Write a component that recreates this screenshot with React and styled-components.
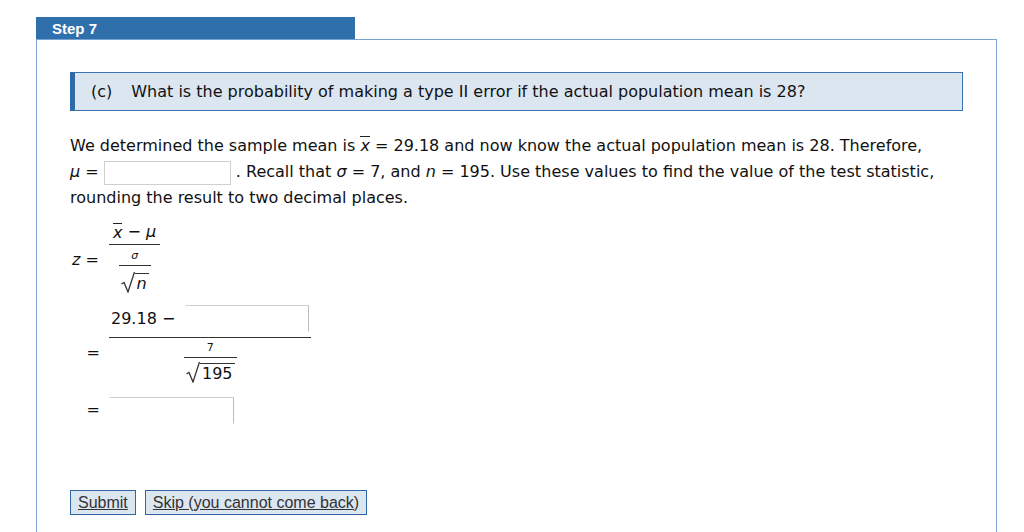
import React from 'react';
import styled, { createGlobalStyle } from 'styled-components';

const Global = createGlobalStyle`
  html, body { margin: 0; padding: 0; background: #fff; }
  body { font-family: "DejaVu Sans", Verdana, sans-serif; color: #222; }
`;

const Page = styled.div`
  padding: 17px 0 0 36px;
  width: 961px;
  height: 515px;
  overflow: hidden;
`;

const StepTab = styled.div`
  width: 303px;
  height: 23px;
  padding-left: 16px;
  background: #2f6fab;
  color: #fff;
  font-family: "Liberation Sans", Arial, sans-serif;
  font-weight: bold;
  font-size: 15px;
  line-height: 23px;
`;

const Panel = styled.div`
  border: 1px solid #7ba3d2;
  border-bottom: none;
  margin-top: -1px;
  padding: 32px 33px 0 33px;
  height: 500px;
`;

const Question = styled.div`
  height: 37px;
  background: #dce6f1;
  border: 1px solid #3a74b0;
  border-left: 5px solid #2f6ba6;
  display: flex;
  align-items: center;
  padding-left: 16px;
  font-size: 16px;
  color: #111;
`;

const Part = styled.span`
  margin-right: 19px;
`;

const Para = styled.p`
  margin: 22px 0 0 0;
  font-size: 16px;
  line-height: 26px;
  color: #111;
`;

const I = styled.i`
  font-style: italic;
`;

const Bar = styled.span`
  display: inline-block;
  border-top: 1.5px solid #222;
  line-height: 1;
  padding-top: 1px;
`;

const Field = styled.span`
  display: inline-block;
  vertical-align: middle;
  width: ${p => p.$w || 124}px;
  height: ${p => p.$h || 24}px;
  margin-top: ${p => p.$mt || 0}px;
  border: 1px solid #cfcfcf;
  ${p => p.$soft && 'border-left-color: #fff; border-bottom-color: #fff; border-right-color: #bdbdbd;'}
  background: #fff;
  box-sizing: border-box;
`;

const Formula = styled.div`
  margin-top: 11px;
  display: grid;
  grid-template-columns: 39px auto;
  justify-content: start;
  justify-items: start;
  align-items: center;
  row-gap: 12px;
  font-size: 16px;
  color: #111;
`;

const Eq = styled.div`
  justify-self: stretch;
  text-align: ${p => p.$right ? 'right' : 'left'};
  padding-left: 2px;
  padding-right: ${p => p.$right ? '9px' : '0'};
  padding-top: ${p => (p.$drop || 0) * 2}px;
`;

const Frac = styled.span`
  display: inline-flex;
  flex-direction: column;
  align-items: center;
  vertical-align: middle;
`;

const Num = styled.span`
  padding: 0 ${p => p.$pad ?? 4}px ${p => p.$bottom ?? 3}px;
  white-space: nowrap;
  display: flex;
  align-items: center;
`;

const Den = styled.span`
  border-top: 1px solid #333;
  padding: ${p => p.$top ?? 2}px ${p => p.$pad ?? 2}px 0;
  align-self: stretch;
  display: flex;
  justify-content: center;
`;

const Small = styled.span`
  font-size: 11px;
  font-style: ${p => p.$it ? 'italic' : 'normal'};
  padding: 0 0 3px;
`;

const Sqrt = styled.span`
  display: inline-flex;
  align-items: flex-end;
`;

const Radicand = styled.span`
  border-top: 1px solid #333;
  padding: 1px 2px 0 2px;
  line-height: 18px;
  margin-top: 4px;
`;

const Buttons = styled.div`
  margin-top: 66px;
  display: flex;
  gap: 9px;
`;

const Button = styled.button`
  height: 25px;
  padding: 0 7px;
  background: #dce6f1;
  border: 1px solid #2f66a3;
  border-radius: 0;
  font-family: "Liberation Sans", Arial, sans-serif;
  font-size: 16px;
  color: #333;
  text-decoration: underline;
  cursor: pointer;
`;

function RootSign() {
  return (
    <svg width="14" height="22" viewBox="0 0 14 22">
      <path d="M0.5 13 L3 11.5 L7 21 L13.5 1" fill="none" stroke="#333" strokeWidth="1.3" />
    </svg>
  );
}

export default function App() {
  return (
    <>
      <Global />
      <Page>
        <StepTab>Step 7</StepTab>
        <Panel>
          <Question>
            <Part>(c)</Part>What is the probability of making a type II error if the actual population mean is 28?
          </Question>
          <Para>
            We determined the sample mean is <Bar><I>x</I></Bar> = 29.18 and now know the actual population mean is 28. Therefore,
            <br />
            <I>μ</I> = <Field $w={127} /> . Recall that <I>σ</I> = 7, and <I>n</I> = 195. Use these values to find the value of the test statistic,
            <br />
            rounding the result to two decimal places.
          </Para>
          <Formula>
            <Eq $drop={2}><I>z</I> =</Eq>
            <Frac>
              <Num><Bar><I>x</I></Bar>&nbsp;− <I>&nbsp;μ</I></Num>
              <Den $top={4} $pad={0}>
                <Frac>
                  <Small $it>σ</Small>
                  <Den $top={3}>
                    <Sqrt><RootSign /><Radicand><I>n</I></Radicand></Sqrt>
                  </Den>
                </Frac>
              </Den>
            </Frac>
            <Eq $right $drop={8}>=</Eq>
            <Frac>
              <Num $pad={2} $bottom={5}>29.18 −&nbsp;&nbsp;<Field $soft $w={124} $h={27} /></Num>
              <Den $top={3}>
                <Frac>
                  <Small>7</Small>
                  <Den $top={1}>
                    <Sqrt><RootSign /><Radicand>195</Radicand></Sqrt>
                  </Den>
                </Frac>
              </Den>
            </Frac>
            <Eq $right>=</Eq>
            <div><Field $soft $w={125} $h={27} $mt={2} /></div>
          </Formula>
          <Buttons>
            <Button>Submit</Button>
            <Button>Skip (you cannot come back)</Button>
          </Buttons>
        </Panel>
      </Page>
    </>
  );
}
